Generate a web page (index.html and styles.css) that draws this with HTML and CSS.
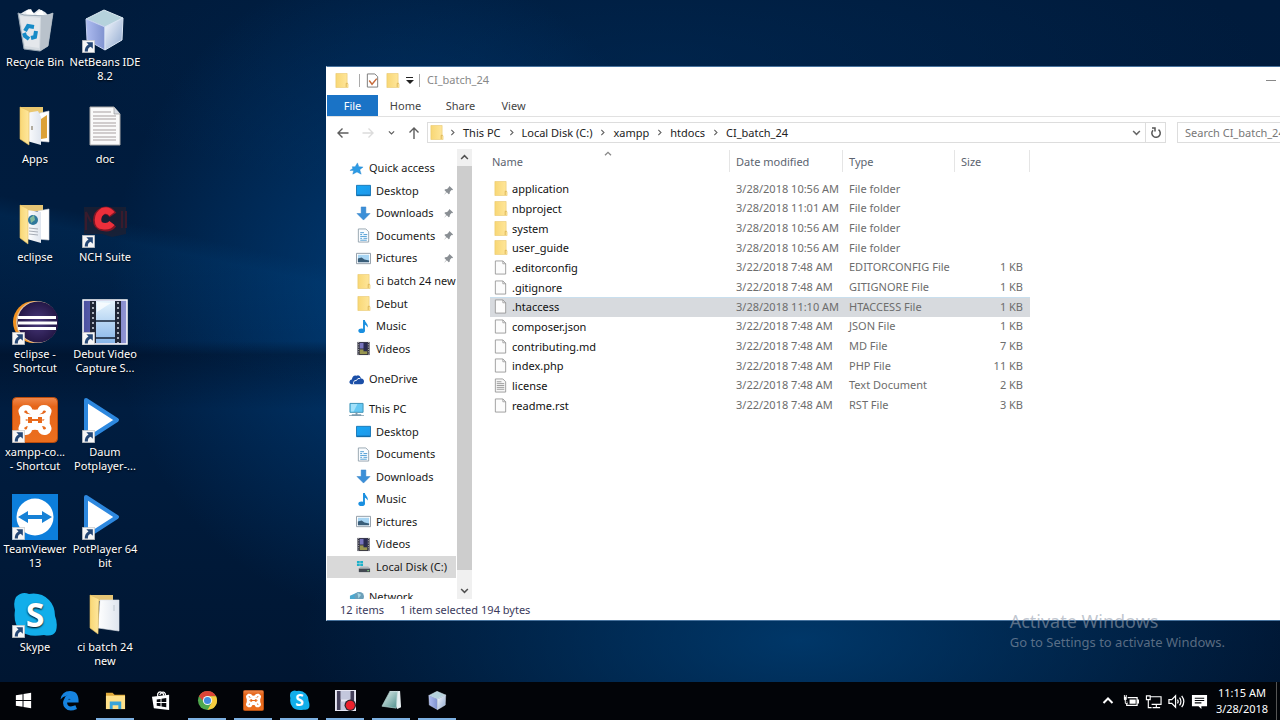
FILE: index.html
```html
<!DOCTYPE html>
<html lang="en">
<head>
<meta charset="utf-8">
<title>Desktop - CI_batch_24</title>
<link rel="stylesheet" href="styles.css">
</head>
<body>
<svg class="sprite" aria-hidden="true">
  <defs>
    <linearGradient id="gFolder" x1="0" x2="1"><stop offset="0" stop-color="#f8d775"/><stop offset="1" stop-color="#ffe79d"/></linearGradient>
    <linearGradient id="gPaper" x1="0" x2="1"><stop offset="0" stop-color="#fff"/><stop offset="1" stop-color="#dfe5ee"/></linearGradient>
    <linearGradient id="gCubeL" x1="0" x2="1"><stop offset="0" stop-color="#aebcf0"/><stop offset="1" stop-color="#7f92cf"/></linearGradient>
    <linearGradient id="gCubeR" x1="0" x2="1" y1="0" y2="1"><stop offset="0" stop-color="#f5f8fd"/><stop offset="1" stop-color="#8ea8cf"/></linearGradient>
    <linearGradient id="gOrange" x1="0" x2="0" y1="0" y2="1"><stop offset="0" stop-color="#f08a4e"/><stop offset=".2" stop-color="#e5651a"/><stop offset="1" stop-color="#ec6f1e"/></linearGradient>
    <linearGradient id="gScreen" x1="0" x2="1" y1="0" y2="1"><stop offset="0" stop-color="#16a8f5"/><stop offset="1" stop-color="#2196e8"/></linearGradient>
    <linearGradient id="gFilm" x1="0" x2="1"><stop offset="0" stop-color="#4a4fa0"/><stop offset="1" stop-color="#9196d4"/></linearGradient>
    <linearGradient id="gSky" x1="0" x2="0" y1="0" y2="1"><stop offset="0" stop-color="#e6f4fd"/><stop offset="1" stop-color="#88b6e8"/></linearGradient>
    <linearGradient id="gNote" x1="0" x2="1" y1="0" y2="1"><stop offset="0" stop-color="#e5f2ef"/><stop offset="1" stop-color="#4f8e8c"/></linearGradient>
    <radialGradient id="gEclipse"><stop offset="0" stop-color="#49397c"/><stop offset="1" stop-color="#241746"/></radialGradient>
  </defs>
  <symbol id="i-arrow" viewBox="0 0 12 12"><path fill="#f6f6f6" stroke="#bbb" stroke-width=".6" d="M.3.3h11.4v11.4H.3z"/><path fill="#254775" d="M4 2h6v6L8 6.200Q5 7.500 5.500 10.500H2.500Q2.500 6 6 4.100z"/></symbol>
  <symbol id="i-bin" viewBox="0 0 46 46">
    <path fill="#e9edf1" d="M8 7l5-3 4-2 5 4 5-4 6 3 3 3-2 6H9z"/><path fill="#fff" d="M14 4l5-2 3 6-7 2zM24 6l6-3 2 5-6 3z"/>
    <path fill="#d5dbe1" stroke="#97a6b3" d="M6 6l6 2 23 1 6-3-5 33-8 5-16-2z"/><path fill="#b9c2cb" d="M29 9l12-3-5 33-8 5z"/><path fill="#e9edf0" d="M8 9l20 2-1 30-14-2z" opacity=".7"/>
    <g fill="none" stroke="#178bc7" stroke-width="4"><path d="M13 24l3-5 6 1"/><path d="M24 24l-1 6-4 1"/><path d="M17 32l-4-3-1-3"/></g>
  </symbol>
  <symbol id="i-cube" viewBox="0 0 46 46"><path fill="#b5d2dc" stroke="#dceaf2" d="M4 12L22 3l19 8-18 9z"/><path fill="url(#gCubeL)" stroke="#c5d0f0" d="M4 12l19 8v23L5 33z"/><path fill="url(#gCubeR)" stroke="#dce7f5" d="M23 20l18-9-1 22-17 10z"/></symbol>
  <symbol id="i-apps" viewBox="0 0 46 46"><path fill="#eac76f" d="M8 3h23v6H15L8 36z"/><path fill="#fff" stroke="#d5d8df" stroke-width=".6" d="M24 10l13-3v31l-11-1z"/><path fill="#dca137" d="M29 15l6-4v23l-6 1z"/><path fill="url(#gPaper)" d="M14 9l12-2 3 6v28l-14-4z"/><path fill="url(#gFolder)" stroke="#e3bd62" stroke-width=".6" d="M8 3l9 4v34L8 35z"/><path fill="#b2ac9f" d="M19 22h2v4h-2z"/></symbol>
  <symbol id="i-folderdocs" viewBox="0 0 46 46"><path fill="#e5c575" d="M8 3h23v6H15L8 36z"/><path fill="#fff" stroke="#d3d7dd" stroke-width=".6" d="M26 9l11-2v31l-12-1z"/><path fill="url(#gPaper)" d="M15 8l14 2v31l-14-4z"/><path fill="url(#gFolder)" stroke="#e3bd62" stroke-width=".6" d="M8 3l8 4v35l-8-6z"/><circle cx="21" cy="18" r="5" fill="#2f789c"/><path fill="#82b99a" d="M18 16l4-3 1 5-4 3z"/><path stroke="#a6acb5" d="M17 26l9 1M17 29l9 1M17 32l9 1"/></symbol>
  <symbol id="i-folderopen" viewBox="0 0 46 46"><path fill="#e5c575" d="M8 3h23v6H15L8 36z"/><path fill="url(#gPaper)" stroke="#dbe0e7" stroke-width=".6" d="M18 8h19v31l-21-3z"/><path stroke="#bdc6ce" d="M32 13v6"/><path fill="url(#gFolder)" stroke="#e3bd62" stroke-width=".6" d="M8 3l9 4-1 35-8-6z"/></symbol>
  <symbol id="i-doc" viewBox="0 0 46 46"><path fill="#fafafa" stroke="#aaa" d="M8 3h24l6 7v31H8z"/><path fill="#d7dbe2" stroke="#999" stroke-width=".7" d="M32 3v7h6"/><path stroke="#a79fa0" d="M11 8h18M11 12h23M11 15h23M11 19h23M11 22h23M11 26h23M11 29h23M11 33h23M11 36h23"/></symbol>
  <symbol id="i-nch" viewBox="0 0 46 46"><path fill="#24202e" d="M2 5h42v27l-14 3-10-3H2z" opacity=".65"/><path stroke="#391b2d" stroke-width="2" d="M4 28V10l5 10M40 9v17M44 9v17" fill="none"/><path fill="none" stroke="#7f1725" stroke-width="8" d="M31 13Q27 7 21 9q-6 3-6 9t6 7q6 2 10-3"/><path fill="none" stroke="#ec2f3b" stroke-width="6.500" d="M30 12Q26 7 21 9q-5 3-5 9t5 6q6 1 9-3"/></symbol>
  <symbol id="i-eclipse" viewBox="0 0 46 46"><circle cx="22" cy="23" r="21" fill="#f39220"/><circle cx="25" cy="23" r="21" fill="#e2c5a4"/><circle cx="26" cy="23" r="20.500" fill="url(#gEclipse)"/><path fill="#fff" d="M6 17h38v3H6zM6 22.500h39v3H6zM6 28h38v3H6z"/></symbol>
  <symbol id="i-film" viewBox="0 0 46 46"><path fill="url(#gFilm)" stroke="#fff" stroke-width="1.500" d="M1 1h44v44H1z"/><path fill="#202636" d="M8 2h6v42H8zM33 2h6v42h-6z"/><path fill="url(#gSky)" d="M14 2h19v42H14z"/><path stroke="#142033" stroke-width="1.500" d="M13 22h21M13 39h21"/><path stroke="#a9afba" stroke-width="2" stroke-dasharray="2 3" d="M11 3v41M36 3v41"/><path fill="#fff" d="M15 3l14 1-14 9z" opacity=".7"/></symbol>
  <symbol id="i-xampp" viewBox="0 0 46 46"><rect x=".5" y=".5" width="45" height="45" rx="4" fill="url(#gOrange)" stroke="#b94b0b"/><g fill="none" stroke="#fff" stroke-width="5.500" stroke-linejoin="round"><path d="M18 20q5 1 10 0 5 0 8-3 2-4-2-6-5-1-6 3-5 3-10 0-1-4-6-3-4 2-2 6 3 3 8 3z"/><path d="M18 26q5-1 10 0 6 0 8 3 2 4-2 6-5 1-6-4-5-2-10 0-1 5-6 4-4-2-2-6 3-3 8-3zM11 18v11M35 18v11"/></g><path fill="#e9691b" d="M16 20h4v2h6v-2h4v6h-4v-2h-6v2h-4z"/></symbol>
  <symbol id="i-play" viewBox="0 0 46 46"><path fill="#fff" stroke="#2d88df" stroke-width="4" stroke-linejoin="round" d="M4 3L35 23 4 43z"/></symbol>
  <symbol id="i-tv" viewBox="0 0 46 46"><path fill="#0c7edb" d="M0 0h46v46H0z"/><circle cx="23" cy="23" r="18.500" fill="#fff"/><path fill="#1681d6" d="M6 23l10-6v4h14v-4l10 6-10 6v-4H16v4z"/></symbol>
  <symbol id="i-skype" viewBox="0 0 46 46"><path fill="#12aeea" d="M4 5Q10-1 17 2Q29 0 37 8q6 6 6 16 3 7 1 15-3 6-12 4-17 3-24-5-7-7-5-20Q1 10 4 5z"/></symbol>
  <symbol id="i-folder" viewBox="0 0 16 16"><path fill="url(#gFolder)" stroke="#e8c66a" stroke-width=".6" d="M2 .5h12v10.500l1 .5v4H2z"/><path stroke="#d4a947" stroke-width=".8" fill="none" d="M13 15v-4h1.500"/></symbol>
  <symbol id="i-file" viewBox="0 0 16 16"><path fill="#fcfcfc" stroke="#929292" stroke-width=".9" d="M2.500 1h8l3 3v11h-11z"/><path fill="none" stroke="#929292" stroke-width=".8" d="M10.500 1v3h3"/></symbol>
  <symbol id="i-text" viewBox="0 0 16 16"><path fill="#f7f7f7" stroke="#929292" stroke-width=".9" d="M2.500 1h8l3 3v11h-11z"/><path stroke="#909090" stroke-width=".9" d="M4 4h5M4 6h8M4 8h8M4 10h8M4 12h8"/></symbol>
  <symbol id="i-check" viewBox="0 0 16 16"><path fill="#fff" stroke="#777" d="M2.500 1h8l3 3v11h-11z"/><path fill="none" stroke="#c66a3a" stroke-width="1.500" d="M4.500 8l3 4 5-6"/></symbol>
  <symbol id="i-star" viewBox="0 0 16 16"><path fill="#2c9be5" stroke="#1b7fc9" stroke-width=".4" d="M9 2l1.500 4L15 6.500l-3.500 2.800L13 14l-4.500-2.300L4 14l1-4H1l3-2-.5-2 3 .2z"/></symbol>
  <symbol id="i-desktop" viewBox="0 0 16 16"><path fill="url(#gScreen)" stroke="#1676b5" d="M.5 2.500h15v11H.5z"/><path stroke="#0b5f9b" d="M1 13h14"/></symbol>
  <symbol id="i-down" viewBox="0 0 16 16"><path fill="#3b8fd8" stroke="#2c7cc3" stroke-width=".5" d="M5.500 1h5v7H15l-7 7-7-7h4.500z"/></symbol>
  <symbol id="i-docs" viewBox="0 0 16 16"><path fill="#f9fcff" stroke="#8b9aa6" stroke-width=".9" d="M2.500 1h8l3 3v11h-11z"/><path stroke="#4b9bd3" d="M4.500 5h4M4.500 7h2M8 7h4M4.500 9h7M4.500 11h2M8 11h4M4.500 13h7"/></symbol>
  <symbol id="i-pics" viewBox="0 0 16 16"><path fill="#fff" stroke="#8e9aa5" d="M.5 2.500h15v11H.5z"/><path fill="#a8d5f3" d="M2 4h12v8H2z"/><path fill="#395d78" d="M2 8l4-1 3 2 5 1v2H2z"/></symbol>
  <symbol id="i-music" viewBox="0 0 16 16"><ellipse cx="6" cy="12.500" rx="3.500" ry="2.500" fill="#1a8fe0"/><path fill="#1a8fe0" d="M7.500 1h2c0 3 4 4 3 8-1-2-2-2.500-3-3v7h-2z"/></symbol>
  <symbol id="i-video" viewBox="0 0 16 16"><path fill="#343442" d="M1.500 1h13v14h-13z"/><path fill="#7774bd" d="M4 2h8v6H4z"/><path fill="#98964f" d="M4 9h8v5H4z"/><path fill="#292b50" d="M8 2h4v9H8z"/><path stroke="#bbb" stroke-dasharray="1 1.500" d="M2.800 1v14M13.300 1v14"/></symbol>
  <symbol id="i-cloud" viewBox="0 0 16 16"><path fill="#1b4fa7" d="M4 13q-4 0-3.500-3Q1 8 3 8q1-5 5-4 3-2 5 3 3 .5 3 3t-3 3z"/><path fill="none" stroke="#fff" stroke-width="1" d="M5 13q-1-4 3-4 1-3 4-2"/></symbol>
  <symbol id="i-pc" viewBox="0 0 16 16"><path fill="#65c8f3" stroke="#3c91b5" d="M1 1.500h14v9.500H1z"/><path fill="#a2e1fa" d="M2 2h7L5 10H2z"/><path fill="#7c9caf" d="M7 11h2v2h4v1H3v-1h4zM0 14h16v1H0z"/></symbol>
  <symbol id="i-disk" viewBox="0 0 16 16"><path fill="#1db1c9" d="M1 2h3v2.500H1zM4.500 2h3v2.500h-3zM1 5h3v2.500H1zM4.500 5h3v2.500h-3z"/><path fill="#434952" d="M3 10h12v4H3z"/><path fill="#aeb6bc" d="M3 10l2-2h8l2 2z"/><path fill="#8ce08d" d="M12 12h2v1h-2z"/></symbol>
  <symbol id="i-net" viewBox="0 0 16 16"><path fill="#4ba8cf" d="M1 6l9-4v9l-9 3z"/><circle cx="11" cy="7" r="5" fill="#6c9fb9"/><path fill="#a3d4e2" d="M9 3l4 2-3 4z"/></symbol>
  <symbol id="i-pin" viewBox="0 0 12 12"><path fill="#8a8f94" d="M7 1l4 4-1 .7-.8-.2L7.500 7.500l-.3 2-1 .5-2-2L1 11l2.500-3.500-2-2L2.500 4.500l2-.2 2-2z"/></symbol>
  <symbol id="i-back" viewBox="0 0 12 12"><path fill="none" stroke="currentColor" stroke-width="1.400" d="M11.500 6H1M5.500 1.500L1 6l4.500 4.500"/></symbol>
  <symbol id="i-up" viewBox="0 0 12 12"><path fill="none" stroke="currentColor" stroke-width="1.400" d="M6 12V1M1.500 5.500L6 1l4.500 4.500"/></symbol>
  <symbol id="i-chev" viewBox="0 0 12 12"><path fill="none" stroke="currentColor" stroke-width="2" d="M1.500 4L6 8.500 10.500 4"/></symbol>
  <symbol id="i-refresh" viewBox="0 0 12 12"><path fill="none" stroke="currentColor" stroke-width="1.500" d="M3 3.200a4.200 4.200 0 1 0 5.500-.5M2 1h3v3.500"/></symbol>
  <symbol id="t-start" viewBox="0 0 22 22"><path fill="#fff" d="M3 5.500l7-1v6H3zM11 4.300L19 3v7.500h-8zM3 11.500h7v6l-7-1zM11 11.500h8V19l-8-1.200z"/></symbol>
  <symbol id="t-edge" viewBox="0 0 22 22"><path fill="none" stroke="#1683df" stroke-width="4.200" d="M18 18Q11 21 8 17.500T7.500 10Q9 6 12 7.500T15 12"/><path fill="#1683df" d="M1.500 10Q3 1 11.500 1 21 1 20.500 13H8v-3h6Q13 5 8 6q-4 .5-6.500 4z"/></symbol>
  <symbol id="t-explorer" viewBox="0 0 22 22"><path fill="#dfaa3b" d="M1 3h7l2 2h11v15H1z"/><path fill="#ffe18a" d="M1 6h20v14H1z"/><path fill="#38a4da" d="M5 12h12v8h-3v-4H8v4H5z"/></symbol>
  <symbol id="t-store" viewBox="0 0 22 22"><path fill="none" stroke="#fff" stroke-width="1.300" d="M7 7V4q2-4 6 0v2M9 5q4-5 6-1v2"/><path fill="#fff" d="M1 7l18-2v16L3 19z"/><path fill="#05070b" d="M6 10l4-.6v3.200H6zM11 9.200l5-.7v4.100h-5zM6 13.600h4v3.400l-4-.5zM11 13.600h5V18l-5-.8z"/></symbol>
  <symbol id="t-chrome" viewBox="0 0 22 22"><circle cx="11" cy="11" r="10" fill="#4fa84d"/><path fill="#dc4437" d="M2 6.500Q5 1 11 1t9 5.500h-9Q7 7 7 12z"/><path fill="#f7cd3f" d="M11 6.500h9Q23 14 17 19l-6 2 4-7z"/><circle cx="11" cy="11" r="4.800" fill="#f5f6f6"/><circle cx="11" cy="11" r="3.700" fill="#428bdc"/></symbol>
  <symbol id="t-rec" viewBox="0 0 22 22"><path fill="#e7e7f3" d="M0 0h22v22H0z"/><path fill="#44405b" d="M2 1h4v20H2zM16 1h4v20h-4z"/><path fill="#c3c7dc" d="M6 1h10v9H6zM6 12h10v9H6z"/><circle cx="16" cy="16" r="6" fill="#2b262e"/><circle cx="16" cy="16" r="4.700" fill="#ec202c"/></symbol>
  <symbol id="t-note" viewBox="0 0 22 22"><path fill="#e6eef0" d="M9 1h11l1 17-4 2z"/><path fill="url(#gNote)" stroke="#b0cfce" stroke-width=".7" d="M9 2h8l-1 17-15-2z"/><path stroke="#b4cac9" stroke-dasharray="1 1" d="M9 1.500h10"/></symbol>
  <symbol id="s-bat" viewBox="0 0 18 18"><path fill="none" stroke="#fff" stroke-width="1.300" d="M6 5h10v8H5V9"/><path fill="#fff" d="M8 7h6.500v4.500H8zM16 7h2v4h-2zM2 2h1v2h1V2h1v5Q3.500 9 2 7z"/><path stroke="#fff" d="M3.500 7v4H6"/></symbol>
  <symbol id="s-net" viewBox="0 0 18 18"><path fill="none" stroke="#fff" stroke-width="1.200" d="M5 4h12v8H7M12 12v3M8 15.500h8M1.500 3h4v4h-4zM3.500 7v8.500H7"/></symbol>
  <symbol id="s-vol" viewBox="0 0 18 18"><path fill="none" stroke="#fff" stroke-width="1.300" d="M1 7h3l4-4v12l-4-4H1zM10 7q1.500 2 0 4M12.200 5q3 4 0 8M14.500 3q4.500 6 0 12"/></symbol>
  <symbol id="s-msg" viewBox="0 0 18 18"><path fill="#fff" d="M1 2h16v12h-6v3l-3-3H1z"/><path stroke="#05070b" stroke-width="1.200" d="M4 5.500h10M4 8h10M4 10.500h7"/></symbol>
</svg>

<div class="screen">
  <main class="desktop">
    <div class="shortcuts">
      <button class="shortcut"><svg class="art"><use href="#i-bin"/></svg><span>Recycle Bin</span></button>
      <button class="shortcut"><svg class="art"><use href="#i-apps"/></svg><span>Apps</span></button>
      <button class="shortcut"><svg class="art"><use href="#i-folderdocs"/></svg><span>eclipse</span></button>
      <button class="shortcut"><span class="linked"><svg class="art"><use href="#i-eclipse"/></svg><svg class="arrow"><use href="#i-arrow"/></svg></span><span>eclipse -<br>Shortcut</span></button>
      <button class="shortcut"><span class="linked"><svg class="art"><use href="#i-xampp"/></svg><svg class="arrow"><use href="#i-arrow"/></svg></span><span>xampp-co...<br>- Shortcut</span></button>
      <button class="shortcut"><span class="linked"><svg class="art"><use href="#i-tv"/></svg><svg class="arrow"><use href="#i-arrow"/></svg></span><span>TeamViewer<br>13</span></button>
      <button class="shortcut"><span class="linked"><svg class="art" viewBox="0 0 46 46"><use href="#i-skype"/><text x="23" y="35" class="logo-letter">S</text></svg><svg class="arrow"><use href="#i-arrow"/></svg></span><span>Skype</span></button>
      <button class="shortcut"><span class="linked"><svg class="art"><use href="#i-cube"/></svg><svg class="arrow"><use href="#i-arrow"/></svg></span><span>NetBeans IDE<br>8.2</span></button>
      <button class="shortcut"><svg class="art"><use href="#i-doc"/></svg><span>doc</span></button>
      <button class="shortcut"><span class="linked"><svg class="art"><use href="#i-nch"/></svg><svg class="arrow"><use href="#i-arrow"/></svg></span><span>NCH Suite</span></button>
      <button class="shortcut"><span class="linked"><svg class="art"><use href="#i-film"/></svg><svg class="arrow"><use href="#i-arrow"/></svg></span><span>Debut Video<br>Capture S...</span></button>
      <button class="shortcut"><span class="linked"><svg class="art"><use href="#i-play"/></svg><svg class="arrow"><use href="#i-arrow"/></svg></span><span>Daum<br>Potplayer-...</span></button>
      <button class="shortcut"><span class="linked"><svg class="art"><use href="#i-play"/></svg><svg class="arrow"><use href="#i-arrow"/></svg></span><span>PotPlayer 64<br>bit</span></button>
      <button class="shortcut"><svg class="art"><use href="#i-folderopen"/></svg><span>ci batch 24<br>new</span></button>
    </div>

    <section class="window" aria-label="CI_batch_24">
      <header class="titlebar">
        <svg class="icon"><use href="#i-folder"/></svg><i class="bar"></i>
        <button aria-label="Properties"><svg class="icon"><use href="#i-check"/></svg></button>
        <button aria-label="New folder"><svg class="icon"><use href="#i-folder"/></svg></button>
        <button class="customize" aria-label="Customize toolbar"><i></i></button><i class="bar"></i>
        <span class="caption">CI_batch_24</span>
        <button class="minimize" aria-label="Minimize"><i></i></button>
      </header>
      <nav class="tabs"><button class="file">File</button><button>Home</button><button>Share</button><button>View</button></nav>
      <div class="navbar">
        <div class="history">
          <button aria-label="Back"><svg class="glyph"><use href="#i-back"/></svg></button>
          <button class="off" aria-label="Forward" disabled><svg class="glyph flip"><use href="#i-back"/></svg></button>
          <button aria-label="Recent"><svg class="tiny"><use href="#i-chev"/></svg></button>
          <button aria-label="Up"><svg class="glyph"><use href="#i-up"/></svg></button>
        </div>
        <div class="address">
          <svg class="icon"><use href="#i-folder"/></svg>
          <svg class="sep"><use href="#i-chev"/></svg><a href="#">This PC</a>
          <svg class="sep"><use href="#i-chev"/></svg><a href="#">Local Disk (C:)</a>
          <svg class="sep"><use href="#i-chev"/></svg><a href="#">xampp</a>
          <svg class="sep"><use href="#i-chev"/></svg><a href="#">htdocs</a>
          <svg class="sep"><use href="#i-chev"/></svg><a href="#">CI_batch_24</a>
          <button class="drop" aria-label="Previous locations"><svg class="small"><use href="#i-chev"/></svg></button>
          <button class="refresh" aria-label="Refresh"><svg class="glyph"><use href="#i-refresh"/></svg></button>
        </div>
        <input class="search" type="search" aria-label="Search" placeholder="Search CI_batch_24">
      </div>
      <div class="body">
        <nav class="tree">
          <ul class="quick">
            <li class="root"><svg class="icon"><use href="#i-star"/></svg>Quick access</li>
            <li><svg class="icon"><use href="#i-desktop"/></svg>Desktop<svg class="pin"><use href="#i-pin"/></svg></li>
            <li><svg class="icon"><use href="#i-down"/></svg>Downloads<svg class="pin"><use href="#i-pin"/></svg></li>
            <li><svg class="icon"><use href="#i-docs"/></svg>Documents<svg class="pin"><use href="#i-pin"/></svg></li>
            <li><svg class="icon"><use href="#i-pics"/></svg>Pictures<svg class="pin"><use href="#i-pin"/></svg></li>
            <li><svg class="icon"><use href="#i-folder"/></svg>ci batch 24 new</li>
            <li><svg class="icon"><use href="#i-folder"/></svg>Debut</li>
            <li><svg class="icon"><use href="#i-music"/></svg>Music</li>
            <li><svg class="icon"><use href="#i-video"/></svg>Videos</li>
          </ul>
          <ul><li class="root"><svg class="icon"><use href="#i-cloud"/></svg>OneDrive</li></ul>
          <ul class="computer">
            <li class="root"><svg class="icon"><use href="#i-pc"/></svg>This PC</li>
            <li><svg class="icon"><use href="#i-desktop"/></svg>Desktop</li>
            <li><svg class="icon"><use href="#i-docs"/></svg>Documents</li>
            <li><svg class="icon"><use href="#i-down"/></svg>Downloads</li>
            <li><svg class="icon"><use href="#i-music"/></svg>Music</li>
            <li><svg class="icon"><use href="#i-pics"/></svg>Pictures</li>
            <li><svg class="icon"><use href="#i-video"/></svg>Videos</li>
            <li class="current"><svg class="icon"><use href="#i-disk"/></svg>Local Disk (C:)</li>
          </ul>
          <ul><li class="root"><svg class="icon"><use href="#i-net"/></svg>Network</li></ul>
        </nav>
        <div class="scrollbar">
          <button aria-label="Scroll up"><svg class="small turn"><use href="#i-chev"/></svg></button>
          <div class="thumb"></div>
          <button class="end" aria-label="Scroll down"><svg class="small"><use href="#i-chev"/></svg></button>
        </div>
        <div class="listing">
          <table>
            <colgroup><col class="c-name"><col class="c-date"><col class="c-type"><col class="c-size"></colgroup>
            <thead><tr><th><span>Name</span><svg class="sort"><use href="#i-chev"/></svg></th><th><span>Date modified</span></th><th><span>Type</span></th><th><span>Size</span></th></tr></thead>
            <tbody>
              <tr><td><svg class="icon"><use href="#i-folder"/></svg>application</td><td>3/28/2018 10:56 AM</td><td>File folder</td><td></td></tr>
              <tr><td><svg class="icon"><use href="#i-folder"/></svg>nbproject</td><td>3/28/2018 11:01 AM</td><td>File folder</td><td></td></tr>
              <tr><td><svg class="icon"><use href="#i-folder"/></svg>system</td><td>3/28/2018 10:56 AM</td><td>File folder</td><td></td></tr>
              <tr><td><svg class="icon"><use href="#i-folder"/></svg>user_guide</td><td>3/28/2018 10:56 AM</td><td>File folder</td><td></td></tr>
              <tr><td><svg class="icon"><use href="#i-file"/></svg>.editorconfig</td><td>3/22/2018 7:48 AM</td><td>EDITORCONFIG File</td><td>1 KB</td></tr>
              <tr><td><svg class="icon"><use href="#i-file"/></svg>.gitignore</td><td>3/22/2018 7:48 AM</td><td>GITIGNORE File</td><td>1 KB</td></tr>
              <tr class="selected"><td><svg class="icon"><use href="#i-file"/></svg>.htaccess</td><td>3/28/2018 11:10 AM</td><td>HTACCESS File</td><td>1 KB</td></tr>
              <tr><td><svg class="icon"><use href="#i-file"/></svg>composer.json</td><td>3/22/2018 7:48 AM</td><td>JSON File</td><td>1 KB</td></tr>
              <tr><td><svg class="icon"><use href="#i-file"/></svg>contributing.md</td><td>3/22/2018 7:48 AM</td><td>MD File</td><td>7 KB</td></tr>
              <tr><td><svg class="icon"><use href="#i-file"/></svg>index.php</td><td>3/22/2018 7:48 AM</td><td>PHP File</td><td>11 KB</td></tr>
              <tr><td><svg class="icon"><use href="#i-text"/></svg>license</td><td>3/22/2018 7:48 AM</td><td>Text Document</td><td>2 KB</td></tr>
              <tr><td><svg class="icon"><use href="#i-file"/></svg>readme.rst</td><td>3/22/2018 7:48 AM</td><td>RST File</td><td>3 KB</td></tr>
            </tbody>
          </table>
        </div>
      </div>
      <footer class="status"><span class="count">12 items</span><span>1 item selected</span><span>194 bytes</span></footer>
    </section>

    <aside class="watermark"><div class="big">Activate Windows</div><div>Go to Settings to activate Windows.</div></aside>
  </main>

  <footer class="taskbar">
    <button aria-label="Start"><svg><use href="#t-start"/></svg></button>
    <button aria-label="Edge"><svg><use href="#t-edge"/></svg></button>
    <button class="open" aria-label="File Explorer"><svg><use href="#t-explorer"/></svg></button>
    <button aria-label="Store"><svg><use href="#t-store"/></svg></button>
    <button class="open" aria-label="Chrome"><svg><use href="#t-chrome"/></svg></button>
    <button class="open" aria-label="XAMPP"><svg><use href="#i-xampp"/></svg></button>
    <button class="open" aria-label="Skype"><svg viewBox="0 0 46 46"><use href="#i-skype"/><text x="23" y="35" class="logo-letter">S</text></svg></button>
    <button class="open" aria-label="Debut"><svg><use href="#t-rec"/></svg></button>
    <button class="open" aria-label="Notepad"><svg><use href="#t-note"/></svg></button>
    <button class="open" aria-label="NetBeans"><svg><use href="#i-cube"/></svg></button>
    <div class="tray">
      <svg class="small turn"><use href="#i-chev"/></svg>
      <svg><use href="#s-bat"/></svg><svg><use href="#s-net"/></svg><svg><use href="#s-vol"/></svg><svg><use href="#s-msg"/></svg>
      <time>11:15 AM<br>3/28/2018</time><i class="peek"></i>
    </div>
  </footer>
</div>
</body>
</html>
```
FILE: styles.css
```css
* { box-sizing: border-box; }
body {
  margin: 0;
  font-family: "Noto Sans", "Open Sans", sans-serif;
  font-size: 11px;
  line-height: 14px;
  color: #1a1a1a;
}
button {
  border: 0;
  padding: 0;
  background: none;
  font: inherit;
  color: inherit;
  display: flex;
  align-items: center;
  justify-content: center;
}
svg { display: block; flex: none; }
a { color: inherit; text-decoration: none; }
.sprite { position: absolute; width: 0; height: 0; }
.logo-letter { font: 700 34px "Open Sans", sans-serif; fill: #fff; text-anchor: middle; }
.icon { width: 15px; height: 15px; }
.glyph { width: 12px; height: 12px; }
.small { width: 9px; height: 9px; }
.tiny { width: 7px; height: 7px; }
.turn { transform: rotate(180deg); }
.flip { transform: rotate(180deg); }

.screen { height: 100vh; display: flex; flex-direction: column; overflow: hidden; }
.desktop {
  flex: 1;
  min-height: 0;
  position: relative;
  overflow: hidden;
  background:
    linear-gradient(192deg, transparent 49%, rgba(0, 70, 130, .2) 51%, transparent 62%),
    linear-gradient(to bottom, transparent 50%, rgba(0, 14, 36, .5) 52%, transparent 60%),
    radial-gradient(ellipse 290px 330px at 400px 290px, rgba(0, 72, 140, .7), transparent),
    radial-gradient(ellipse 500px 200px at 800px 640px, rgba(0, 72, 132, .65), transparent),
    radial-gradient(ellipse 600px 150px at 660px 60px, rgba(0, 48, 96, .4), transparent),
    linear-gradient(to bottom, #001b3c, #001d40 60%, #001632);
}

.shortcuts {
  height: 100%;
  display: grid;
  grid-auto-flow: column;
  grid-template-rows: repeat(7, 1fr);
  grid-auto-columns: 70px;
  justify-content: start;
}
.shortcut {
  flex-direction: column;
  justify-content: flex-start;
  gap: 2px;
  padding-top: 7px;
  color: #fff;
  white-space: nowrap;
  text-shadow: 0 1px 2px #000;
}
.art { width: 46px; height: 46px; }
.linked { position: relative; }
.arrow { position: absolute; left: 0; bottom: 0; width: 13px; height: 13px; }

.window {
  position: absolute;
  left: 326px;
  right: -98px;
  top: 66px;
  bottom: 61px;
  display: flex;
  flex-direction: column;
  background: #fff;
  border: 1px solid #47729d;
  border-left-color: #fff;
}
.titlebar { display: flex; align-items: center; height: 28px; padding: 0 0 2px 7px; gap: 5px; color: #888; }
.titlebar .bar { width: 1px; height: 13px; background: #aaa; margin-left: 5px; }
.titlebar .customize + .bar { margin: 0 2px 0 0; }
.customize { width: 9px; }
.customize i { width: 7px; height: 7px; border-top: 1px solid #222; position: relative; }
.customize i::after { content: ""; position: absolute; left: 0; top: 2px; border: 4px solid transparent; border-top-color: #222; border-bottom: 0; }
.minimize { margin-left: auto; width: 120px; justify-content: flex-start; }
.minimize i { width: 10px; height: 1px; background: #888; margin-left: 9px; }

.tabs { display: flex; height: 22px; border-bottom: 1px solid #e1e1e1; color: #444; }
.tabs button { width: 55px; }
.tabs .file { width: 51px; background: #1a73c6; color: #fff; }
.tabs button:last-child { width: 51px; }

.navbar { display: flex; height: 32px; align-items: center; padding: 0 8px 1px 0; }
.history { display: flex; align-items: center; width: 100px; padding: 0 7px 0 10px; justify-content: space-between; color: #5d5d5d; }
.history .off { color: #dcdcdc; }
.address { flex: 1; display: flex; align-items: center; height: 21px; border: 1px solid #ddd; padding-left: 1px; color: #222; }
.address .sep { width: 7px; height: 7px; margin: 0 7px; transform: rotate(-90deg); color: #666; }
.address .icon + .sep { margin-left: 5px; }
.drop { margin-left: auto; width: 18px; height: 100%; color: #666; }
.refresh { width: 20px; height: 100%; border-left: 1px solid #ddd; color: #555; }
.search { width: 192px; height: 21px; margin-left: 11px; padding: 0 7px; border: 1px solid #ddd; border-radius: 0; font: inherit; background: #fff; }
.search::placeholder { color: #777; }

.body { flex: 1; min-height: 0; display: flex; }
.tree { width: 129px; overflow: hidden; padding-top: 8px; display: flex; flex-direction: column; gap: 8px; }
.tree ul { list-style: none; margin: 0; padding: 0; flex: none; display: grid; grid-auto-rows: 1fr; }
.tree .quick { height: 203px; }
.tree .computer { height: 180px; }
.tree li { display: flex; align-items: center; gap: 5px; padding-left: 29px; min-height: 22px; white-space: nowrap; }
.tree .root { padding-left: 22px; }
.tree .current { background: #d9d9d9; }
.pin { width: 11px; height: 11px; margin-left: auto; margin-right: 2px; }
.scrollbar { width: 15px; margin-left: 1px; display: flex; flex-direction: column; background: #f0f0f0; color: #505050; }
.scrollbar button { height: 17px; }
.scrollbar .thumb { flex: 1; background: #cdcdcd; }
.scrollbar .end { height: 29px; padding-top: 12px; }

.listing { flex: 1; padding: 1px 0 0 18px; }
table { width: 540px; height: 265px; table-layout: fixed; border-collapse: collapse; }
.c-name { width: 240px; }
.c-date { width: 113px; }
.c-type { width: 112px; }
.c-size { width: 75px; }
th { height: 29px; padding: 0 0 6px 6px; font-weight: 400; text-align: left; color: #5c6470; background: linear-gradient(#e5e5e5, #e5e5e5) right top / 1px 22px no-repeat; position: relative; }
th:first-child { padding-left: 2px; }
.sort { position: absolute; left: 114px; top: 0; width: 8px; height: 8px; transform: rotate(180deg); color: #888; }
td { padding: 0 0 0 6px; color: #6d6d6d; white-space: nowrap; }
td:first-child { color: #111; padding-left: 3px; }
td .icon { display: inline-block; vertical-align: text-bottom; margin-right: 4px; }
td:last-child { text-align: right; padding-right: 7px; }
.selected { background: #d7dade; box-shadow: inset 0 1px #c9dfee; }

.status { display: flex; align-items: center; height: 21px; padding-left: 13px; gap: 3px; color: #3a3a5c; }
.status .count { width: 57px; }

.watermark {
  position: absolute;
  right: 55px;
  bottom: 30px;
  font-size: 13px;
  line-height: 20px;
  color: rgba(150, 160, 175, .6);
  pointer-events: none;
}
.watermark .big { font-size: 18px; line-height: 22px; }

.taskbar { flex: none; height: 38px; display: flex; background: #020408; color: #fff; }
.taskbar > button { width: 46px; border-bottom: 2px solid transparent; padding: 0 4px; }
.taskbar > button svg { width: 21px; height: 21px; }
.taskbar .open { background: linear-gradient(#7db1e2, #7db1e2) center bottom / 38px 2px no-repeat; background-origin: border-box; background-clip: border-box; }
.tray { margin-left: auto; display: flex; align-items: center; gap: 6px; }
.tray svg { width: 17px; height: 17px; }
.tray .small { width: 12px; height: 12px; margin-right: 2px; }
.tray time { width: 56px; text-align: center; line-height: 16px; }
.peek { width: 4px; height: 100%; border-left: 1px solid #555; }
```
